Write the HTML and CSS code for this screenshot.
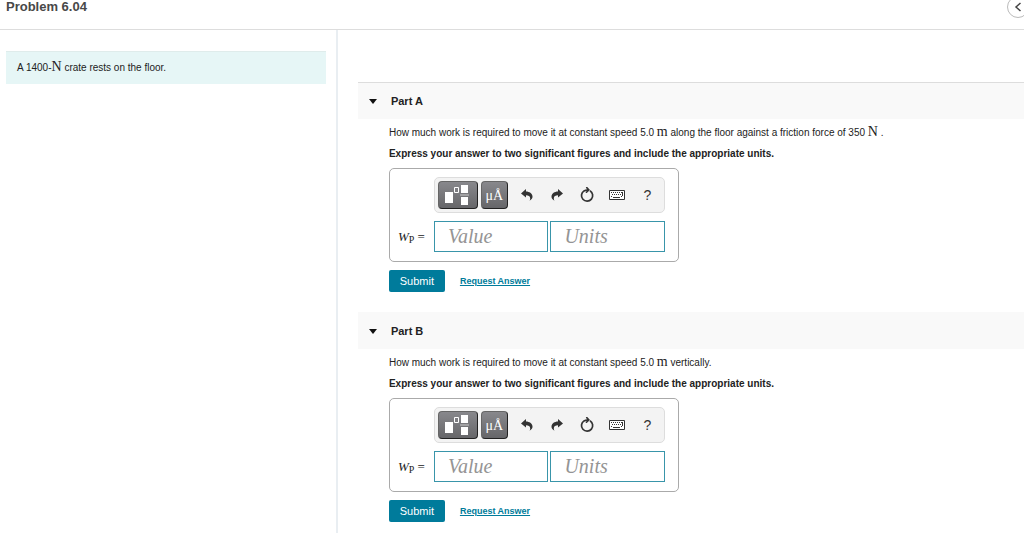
FILE: index.html
```html
<!DOCTYPE html>
<html lang="en">
<head>
<meta charset="UTF-8" />
<meta name="viewport" content="width=device-width, initial-scale=1" />
<title>Problem 6.04</title>
<link rel="stylesheet" href="styles.css">
</head>
<body>

<!-- icons shared by both answer toolbars -->
<svg class="sprite" aria-hidden="true">
  <symbol id="icon-template" viewBox="0 0 38 26">
    <path fill="#fff" d="M6 10h8v11H6zM22 3h7v8h-7zM22 15h7v8h-7z" />
    <path fill="none" stroke="#fff" d="M15.500 5.500h4v5h-4z" />
    <path stroke="#ccc" d="M21 13h9" />
  </symbol>
  <symbol id="icon-undo" viewBox="0 0 12 12">
    <path fill="#333" d="M5 0L0 4.500 5 8.500V6.300c2.500 0 4 .9 4.200 2.900.1 1-.3 1.800-.7 2.600C10.500 10.500 11.800 9 11.500 7 11.100 4.300 8.500 2.500 5 2.400z" />
  </symbol>
  <symbol id="icon-reset" viewBox="0 0 14 16">
    <path fill="none" stroke="#333" stroke-width="1.700" d="M10 3.800A5.600 5.600 0 1 1 4 3.900Q5.500 3 8 3.100" />
    <path fill="#333" d="M5.800 0h1.500l2.700 3-3.200 3H5.500l1.600-3z" />
  </symbol>
  <symbol id="icon-keyboard" viewBox="0 0 16 10">
    <path fill="#fff" stroke="#333" d="M.5.500h15v9H.5z" />
    <path fill="none" stroke="#333" stroke-dasharray="1 1" d="M2 2.500h11M3 4.500h9M2 6.500h2M12 6.500h2" />
    <path stroke="#333" d="M4 7.500h7M13.500 2v4" />
  </symbol>
</svg>

<header class="page-header">
  <h1>Problem 6.04</h1>
  <button class="collapse-btn" aria-label="Previous">
    <svg width="8" height="12" viewBox="0 0 8 12"><path d="M6.500 2L2 6l4.500 4" fill="none" stroke="#444" stroke-width="1.500" /></svg>
  </button>
</header>

<main class="layout">
  <aside class="sidebar">
    <p class="intro">A 1400-<span class="math">N</span> crate rests on the floor.</p>
  </aside>

  <div class="parts">
    <section class="part">
      <h2 class="part-header"><button class="part-toggle" aria-expanded="true"><span class="caret"></span>Part A</button></h2>
      <div class="part-body">
        <p class="question">How much work is required to move it at constant speed 5.0 <span class="math">m</span> along the floor against a friction force of 350 <span class="math">N</span> .</p>
        <p class="instructions">Express your answer to two significant figures and include the appropriate units.</p>
        <div class="answer-box">
          <div class="toolbar">
            <button class="tool dark wide" aria-label="Templates"><svg width="38" height="26"><use href="#icon-template" /></svg></button>
            <button class="tool dark" aria-label="Symbols">μÅ</button>
            <div class="tool-icons">
              <button class="tool" aria-label="Undo"><svg width="12" height="12"><use href="#icon-undo" /></svg></button>
              <button class="tool" aria-label="Redo"><svg class="flip" width="12" height="12"><use href="#icon-undo" /></svg></button>
              <button class="tool" aria-label="Reset"><svg width="14" height="16"><use href="#icon-reset" /></svg></button>
              <button class="tool" aria-label="Keyboard shortcuts"><svg width="16" height="10"><use href="#icon-keyboard" /></svg></button>
              <button class="tool help" aria-label="Help">?</button>
            </div>
          </div>
          <label class="symbol" for="value-a"><i>W</i><sub>P</sub> =</label>
          <div class="fields">
            <input id="value-a" type="text" placeholder="Value">
            <input type="text" placeholder="Units" aria-label="Units">
          </div>
        </div>
        <div class="actions">
          <button class="submit">Submit</button>
          <a class="request" href="#">Request Answer</a>
        </div>
      </div>
    </section>

    <section class="part">
      <h2 class="part-header"><button class="part-toggle" aria-expanded="true"><span class="caret"></span>Part B</button></h2>
      <div class="part-body">
        <p class="question">How much work is required to move it at constant speed 5.0 <span class="math">m</span> vertically.</p>
        <p class="instructions">Express your answer to two significant figures and include the appropriate units.</p>
        <div class="answer-box">
          <div class="toolbar">
            <button class="tool dark wide" aria-label="Templates"><svg width="38" height="26"><use href="#icon-template" /></svg></button>
            <button class="tool dark" aria-label="Symbols">μÅ</button>
            <div class="tool-icons">
              <button class="tool" aria-label="Undo"><svg width="12" height="12"><use href="#icon-undo" /></svg></button>
              <button class="tool" aria-label="Redo"><svg class="flip" width="12" height="12"><use href="#icon-undo" /></svg></button>
              <button class="tool" aria-label="Reset"><svg width="14" height="16"><use href="#icon-reset" /></svg></button>
              <button class="tool" aria-label="Keyboard shortcuts"><svg width="16" height="10"><use href="#icon-keyboard" /></svg></button>
              <button class="tool help" aria-label="Help">?</button>
            </div>
          </div>
          <label class="symbol" for="value-b"><i>W</i><sub>P</sub> =</label>
          <div class="fields">
            <input id="value-b" type="text" placeholder="Value">
            <input type="text" placeholder="Units" aria-label="Units">
          </div>
        </div>
        <div class="actions">
          <button class="submit">Submit</button>
          <a class="request" href="#">Request Answer</a>
        </div>
      </div>
    </section>
  </div>
</main>

</body>
</html>
```

FILE: styles.css
```css
* {
  box-sizing: border-box;
}

body {
  margin: 0;
  min-height: 100vh;
  display: flex;
  flex-direction: column;
  overflow-x: hidden;
  background-color: #fff;
  color: #222;
  font-family: "Liberation Sans", Arial, sans-serif;
  font-size: 10px;
  line-height: 16px;
}

h1, h2, p {
  margin: 0;
}

button {
  font-family: inherit;
  cursor: pointer;
}

.sprite {
  position: absolute;
  width: 0;
  height: 0;
}

.page-header {
  display: flex;
  justify-content: space-between;
  align-items: flex-start;
  height: 30px;
  padding-left: 6px;
  border-bottom: 1px solid #ddd;
}

.page-header h1 {
  font-size: 13px;
  line-height: 14px;
  color: #484848;
}

.collapse-btn {
  display: flex;
  align-items: center;
  justify-content: center;
  width: 22px;
  height: 22px;
  margin: -4px -5px 0 0;
  padding: 0;
  border: 1px solid #bbb;
  border-radius: 50%;
  background: #fff;
}

.layout {
  flex: 1;
  display: grid;
  grid-template-columns: 33% 1fr;
}

.sidebar {
  padding: 21px 10px 0 6px;
  border-right: 2px solid #e9eef2;
}

.intro {
  padding: 8px 11px;
  border-top: 1px solid #dfeceb;
  background-color: #e6f6f6;
}

.math {
  font-family: "Liberation Serif", "Times New Roman", serif;
  font-size: 14px;
  line-height: 1;
}

.parts {
  padding: 52px 0 0 20px;
}

.part {
  margin-bottom: 20px;
}

.part:last-child {
  margin-bottom: 0;
}

.part-header {
  border-top: 1px solid #f9f9f9;
  background-color: #f9f9f9;
  line-height: 16px;
}

.part:first-child .part-header {
  border-top-color: #ddd;
}

.part-toggle {
  display: flex;
  align-items: center;
  gap: 14px;
  width: 100%;
  padding: 10px 11px;
  border: 0;
  background: none;
  color: #222;
  font-size: 11px;
  font-weight: bold;
  line-height: 16px;
}

.caret {
  border: 4px solid transparent;
  border-top: 5px solid #111;
  border-bottom: 0;
}

.part-body {
  padding: 6px 0 0 31px;
}

.question {
  margin-bottom: 5px;
}

.instructions {
  margin-bottom: 6px;
  font-weight: bold;
}

.answer-box {
  display: grid;
  grid-template-columns: 36px 231px;
  row-gap: 8px;
  width: fit-content;
  padding: 8px 13px 9px 8px;
  border: 1px solid #aaa;
  border-radius: 5px;
}

.toolbar {
  grid-column: 2;
  display: flex;
  align-items: center;
  gap: 3px;
  padding: 3px;
  border: 1px solid #ddd;
  border-radius: 5px;
  background-color: #f3f3f3;
}

.tool-icons {
  flex: 1;
  display: flex;
  justify-content: space-between;
  padding-left: 3px;
}

.tool {
  display: flex;
  align-items: center;
  justify-content: center;
  width: 27px;
  height: 28px;
  padding: 0;
  border: 0;
  background: none;
  color: #333;
}

.tool.dark {
  padding-top: 2px;
  border: 1px solid #222;
  border-top-color: #666;
  border-left-color: #666;
  border-radius: 4px;
  background: linear-gradient(#88888c, #666669);
  color: #fff;
  font-family: "Liberation Serif", "Times New Roman", serif;
  font-size: 14px;
}

.tool.wide {
  width: 40px;
  padding: 0;
}

.tool.help {
  font-size: 14px;
}

.flip {
  transform: scaleX(-1);
}

.symbol {
  align-self: center;
  font-family: "Liberation Serif", "Times New Roman", serif;
  font-size: 13px;
  white-space: nowrap;
}

.symbol sub {
  font-size: 10px;
  line-height: 1;
  vertical-align: -2px;
}

.fields {
  display: flex;
  gap: 2px;
}

.fields input {
  flex: 1;
  min-width: 0;
  height: 31px;
  padding: 0 13px;
  border: 1px solid #3995aa;
  background: #fff;
  font-family: "Liberation Serif", "Times New Roman", serif;
  font-size: 20px;
}

.fields input::placeholder {
  color: #949494;
  font-style: italic;
}

.actions {
  display: flex;
  align-items: center;
  gap: 15px;
  margin-top: 8px;
}

.submit {
  height: 22px;
  width: 56px;
  padding: 0;
  border: 0;
  border-radius: 2px;
  background-color: #007b9b;
  color: #fff;
  font-size: 11px;
}

.request {
  color: #007b9b;
  font-size: 9px;
  font-weight: bold;
}
```
